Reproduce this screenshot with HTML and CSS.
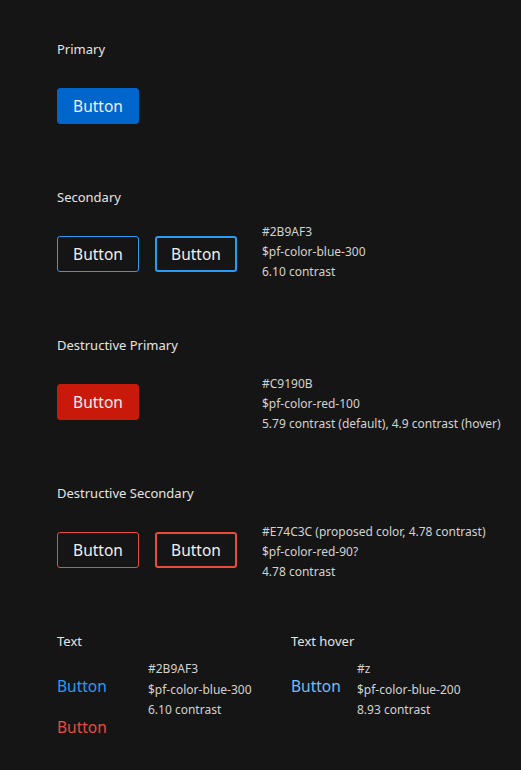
FILE: index.html
```html
<!DOCTYPE html>
<html lang="en">
<head>
    <meta charset="UTF-8">
    <meta name="viewport" content="width=device-width, initial-scale=1.0">
    <title>Button colors - dark theme</title>
    <link rel="stylesheet" href="styles.css">
</head>
<body>

    <div class="section">
        <h3>Primary</h3>
        <div class="row">
            <button class="btn btn-primary">Button</button>
        </div>
    </div>

    <div class="section">
        <h3>Secondary</h3>
        <div class="row">
            <button class="btn btn-secondary">Button</button>
            <button class="btn btn-secondary hover">Button</button>
            <div class="info info-high">
                <p>#2B9AF3</p>
                <p>$pf-color-blue-300</p>
                <p>6.10 contrast</p>
            </div>
        </div>
    </div>

    <div class="section">
        <h3>Destructive Primary</h3>
        <div class="row">
            <button class="btn btn-danger">Button</button>
            <div class="info info-wide">
                <p>#C9190B</p>
                <p>$pf-color-red-100</p>
                <p>5.79 contrast (default), 4.9 contrast (hover)</p>
            </div>
        </div>
    </div>

    <div class="section">
        <h3>Destructive Secondary</h3>
        <div class="row">
            <button class="btn btn-danger-secondary">Button</button>
            <button class="btn btn-danger-secondary hover">Button</button>
            <div class="info">
                <p>#E74C3C (proposed color, 4.78 contrast)</p>
                <p>$pf-color-red-90?</p>
                <p>4.78 contrast</p>
            </div>
        </div>
    </div>

    <div class="text-grid">
        <div class="text-col text-col-left">
            <h3>Text</h3>
            <div class="text-body">
                <div class="links">
                    <button class="link link-blue">Button</button>
                    <button class="link link-red">Button</button>
                </div>
                <div class="info">
                    <p>#2B9AF3</p>
                    <p>$pf-color-blue-300</p>
                    <p>6.10 contrast</p>
                </div>
            </div>
        </div>
        <div class="text-col">
            <h3>Text hover</h3>
            <div class="text-body">
                <div class="links links-short">
                    <button class="link link-hover">Button</button>
                </div>
                <div class="info">
                    <p>#z</p>
                    <p>$pf-color-blue-200</p>
                    <p>8.93 contrast</p>
                </div>
            </div>
        </div>
    </div>

</body>
</html>
```

FILE: styles.css
```css
body {
    font-family: "Noto Sans", "Liberation Sans", sans-serif;
    background-color: #151515;
    color: #e0e0e0;
    margin: 0;
    padding: 39px 57px;
}
h3 {
    font-size: 13px;
    font-weight: normal;
    line-height: 20px;
    margin: 0;
    color: #e4e4e4;
}
.section {
    margin-bottom: 63px;
}
.row {
    display: flex;
    align-items: flex-start;
    gap: 16px;
    height: 36px;
    margin-top: 29px;
}
.btn {
    flex-shrink: 0;
    font-family: inherit;
    font-size: 15.5px;
    width: 82px;
    height: 36px;
    border-radius: 3px;
    padding: 0;
    color: #f0f0f0;
    background: transparent;
    border: 1px solid transparent;
}
.btn-primary {
    background-color: #0066cc;
    border-color: #0066cc;
}
.btn-secondary {
    border-color: #2b9af3;
}
.btn-danger {
    background-color: #c9190b;
    border-color: #c9190b;
}
.btn-danger-secondary {
    border-color: #e74c3c;
}
.btn.hover {
    border-width: 2px;
}
.info {
    font-size: 12px;
    line-height: 20px;
    color: #d2d2d2;
    margin-left: 9px;
    margin-top: -10px;
}
.info-high {
    margin-top: -14px;
}
.info-wide {
    margin-left: 107px;
}
.info p {
    margin: 0;
    white-space: nowrap;
}
.text-grid {
    display: flex;
}
.text-col-left {
    width: 234px;
}
.text-body {
    display: flex;
    margin-top: 8px;
}
.text-body .info {
    margin: 0;
    line-height: 20.5px;
}
.links {
    display: flex;
    flex-direction: column;
    gap: 21px;
    width: 91px;
    margin-top: 17px;
}
.links-short {
    width: 66px;
}
.link {
    font-family: inherit;
    font-size: 15.5px;
    line-height: 20px;
    background: none;
    border: none;
    padding: 0;
    text-align: left;
}
.link-blue { color: #2b9af3; }
.link-red { color: #e74c3c; }
.link-hover { color: #73bcf7; }
```
